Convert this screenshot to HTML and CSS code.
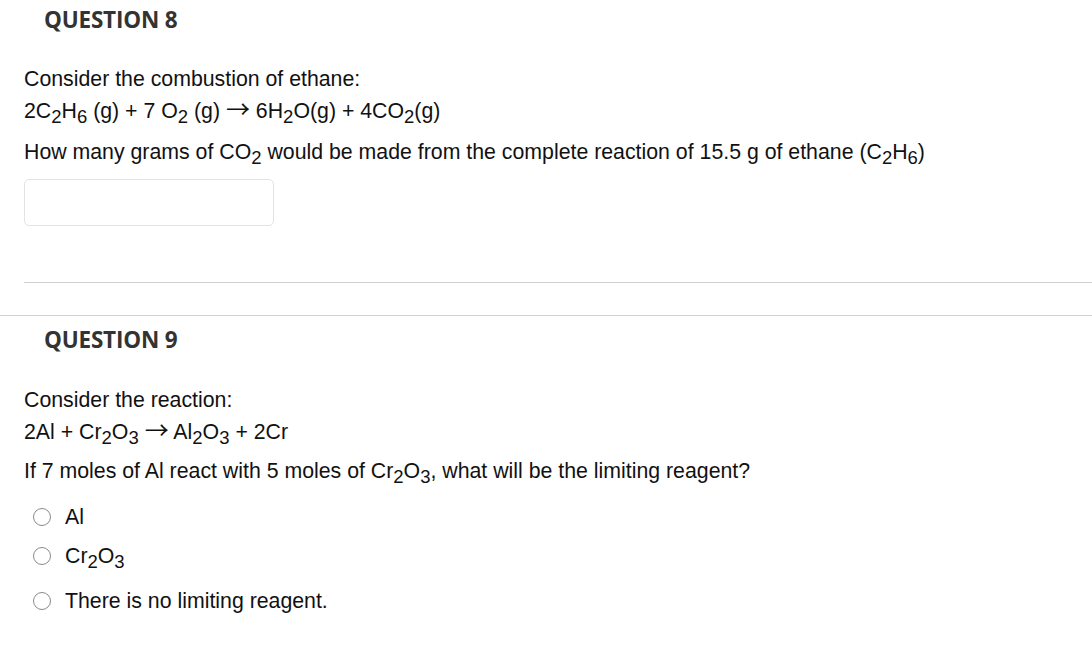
FILE: index.html
```html
<!DOCTYPE html>
<html>
<head>
<meta charset="utf-8">
<link rel="stylesheet" href="styles.css">
</head>
<body>
<section class="question q8">
  <h2 class="q-title">QUESTION 8</h2>
  <div class="q-body">
    <p class="line">Consider the combustion of ethane:</p>
    <p class="line eq">2C<sub>2</sub>H<sub>6</sub> (g) + 7 O<sub>2</sub> (g) <span class="arrow">→</span> 6H<sub>2</sub>O(g) + 4CO<sub>2</sub>(g)</p>
    <p class="line ask">How many grams of CO<sub>2</sub> would be made from the complete reaction of 15.5 g of ethane (C<sub>2</sub>H<sub>6</sub>)</p>
    <input class="answer" type="text">
  </div>
  <hr class="inner-rule">
</section>
<hr class="outer-rule">
<section class="question q9">
  <h2 class="q-title">QUESTION 9</h2>
  <div class="q-body">
    <p class="line">Consider the reaction:</p>
    <p class="line eq">2Al + Cr<sub>2</sub>O<sub>3</sub> <span class="arrow">→</span> Al<sub>2</sub>O<sub>3</sub> + 2Cr</p>
    <p class="line ask">If 7 moles of Al react with 5 moles of Cr<sub>2</sub>O<sub>3</sub>, what will be the limiting reagent?</p>
    <ul class="options">
      <li class="option"><span class="radio"></span><span>Al</span></li>
      <li class="option"><span class="radio"></span><span>Cr<sub>2</sub>O<sub>3</sub></span></li>
      <li class="option"><span class="radio"></span><span>There is no limiting reagent.</span></li>
    </ul>
  </div>
</section>
</body>
</html>
```
FILE: styles.css
```css
html, body {
  margin: 0;
  padding: 0;
  background: #fff;
}
body {
  font-family: "Liberation Sans", Arial, sans-serif;
  font-size: 21.3px;
  color: #111;
}
.question {
  padding-left: 24px;
}
.q-title {
  font-family: "Open Sans", sans-serif;
  font-weight: 700;
  font-size: 22.5px;
  color: #333;
  margin: 0;
  padding: 5px 0 0 20px;
  line-height: 30px;
  letter-spacing: -0.2px;
}
.q-body {
  padding-top: 32px;
}
.line {
  margin: 0;
  line-height: 24px;
}
.line.eq {
  margin-top: 8px;
}
.q8 .line.ask {
  margin-top: 17px;
}
.q9 .line.ask {
  margin-top: 15px;
}
sub {
  font-size: 18.5px;
  vertical-align: -5px;
  line-height: 0;
}
.arrow {
  font-family: "Noto Sans CJK SC", "DejaVu Sans", sans-serif;
  font-size: 24px;
  line-height: 0;
}
.answer {
  display: block;
  margin-top: 15px;
  width: 250px;
  height: 47px;
  box-sizing: border-box;
  border: 1px solid #e3e3e3;
  border-radius: 5px;
  background: #fff;
}
.inner-rule {
  margin: 56px 0 0 0;
  border: 0;
  border-top: 1px solid #d0d0d0;
}
.outer-rule {
  margin: 32px 0 0 0;
  border: 0;
  border-top: 1px solid #d0d0d0;
}
.q9 .q-title {
  padding-top: 9px;
}
.q9 .q-body {
  padding-top: 33px;
}
.options {
  list-style: none;
  margin: 22px 0 0 0;
  padding: 0 0 0 9px;
}
.option {
  display: flex;
  align-items: center;
  gap: 14px;
  line-height: 24px;
}
.option + .option {
  margin-top: 15px;
}
.option:last-child {
  margin-top: 21px;
}
.radio {
  width: 18px;
  height: 18px;
  border: 1.5px solid #8a8a8a;
  border-radius: 50%;
  box-sizing: border-box;
  flex: none;
}
```
